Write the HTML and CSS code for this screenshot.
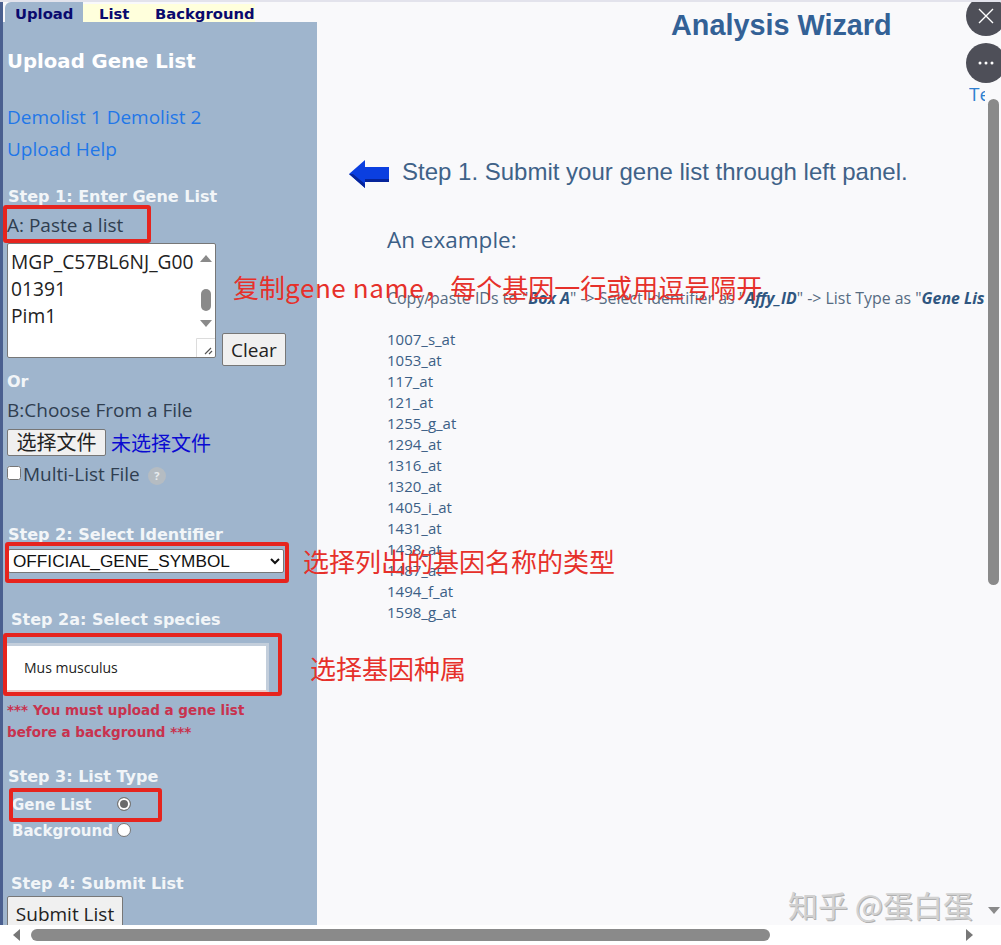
FILE: index.html
```html
<!DOCTYPE html>
<html lang="en">
<head>
    <meta charset="UTF-8">
    <meta name="viewport" content="width=device-width, initial-scale=1.0">
    <title>Analysis Wizard</title>
    <link rel="stylesheet" href="styles.css">
</head>
<body>

<div class="window">
    <div class="content">
        <div class="sidebar">
            <div class="tabs">
                <span class="tab tab-active">Upload</span>
                <span class="tab tab-list">List</span>
                <span class="tab tab-bg">Background</span>
            </div>
            <div class="panel">
                <h2 class="panel-title">Upload Gene List</h2>
                <p class="links"><a href="#">Demolist 1</a> <a href="#">Demolist 2</a></p>
                <p class="links links-help"><a href="#">Upload Help</a></p>

                <h4 class="step step-1">Step 1: Enter Gene List</h4>
                <div class="plain plain-paste">A: Paste a list</div>
                <div class="paste-row">
                    <div class="paste-box">
                        <div class="paste-text">MGP_C57BL6NJ_G00<br>01391<br>Pim1</div>
                        <div class="paste-scroll">
                            <span class="arrow arrow-up"></span>
                            <span class="paste-thumb"></span>
                            <span class="arrow arrow-down"></span>
                        </div>
                        <svg class="grip" width="19" height="19" viewBox="0 0 19 19">
                            <path d="M0.5 19V0.5H19" fill="#fff" stroke="#dcdcdc"/>
                            <path d="M9 16L15 10M13 16L16 13" stroke="#555" stroke-width="1.2"/>
                        </svg>
                    </div>
                    <button class="btn btn-clear" type="button">Clear</button>
                </div>
                <h4 class="step step-or">Or</h4>
                <div class="plain plain-file">B:Choose From a File</div>
                <div class="file-row">
                    <button class="btn btn-file" type="button">选择文件</button>
                    <span class="file-none">未选择文件</span>
                </div>
                <div class="multi-row">
                    <input class="check" type="checkbox">
                    <span class="plain">Multi-List File</span>
                    <span class="help-dot">?</span>
                </div>

                <h4 class="step step-2">Step 2: Select Identifier</h4>
                <select class="identifier">
                    <option>OFFICIAL_GENE_SYMBOL</option>
                </select>

                <h4 class="step step-2a">Step 2a: Select species</h4>
                <div class="species">Mus musculus</div>
                <p class="warning">*** You must upload a gene list before a background ***</p>

                <h4 class="step step-3">Step 3: List Type</h4>
                <div class="radio-row radio-first">
                    <span class="radio-label">Gene List</span>
                    <span class="radio radio-on"></span>
                </div>
                <div class="radio-row">
                    <span class="radio-label">Background</span>
                    <span class="radio"></span>
                </div>

                <h4 class="step step-4">Step 4: Submit List</h4>
                <button class="btn btn-submit" type="button">Submit List</button>
            </div>
        </div>

        <div class="main">
            <h1 class="wizard-title">Analysis Wizard</h1>
            <div class="step-line">
                <svg class="left-arrow" width="42" height="30" viewBox="0 0 42 30">
                    <path d="M1 15L17 1V8H41V23H17V29Z" fill="#0b3fe0"/>
                    <path d="M17 23H41V20H17ZM1 15L17 29V25L5 15Z" fill="#06249a"/>
                </svg>
                <span>Step 1. Submit your gene list through left panel.</span>
            </div>
            <div class="example">
                <h3 class="example-title">An example:</h3>
                <p class="example-note">Copy/paste IDs to "<b><i>Box A</i></b>" -> Select Identifier as "<b><i>Affy_ID</i></b>" -> List Type as "<b><i>Gene List</i></b>" -> Submit List</p>
                <ul class="ids">
                    <li>1007_s_at</li>
                    <li>1053_at</li>
                    <li>117_at</li>
                    <li>121_at</li>
                    <li>1255_g_at</li>
                    <li>1294_at</li>
                    <li>1316_at</li>
                    <li>1320_at</li>
                    <li>1405_i_at</li>
                    <li>1431_at</li>
                    <li>1438_at</li>
                    <li>1487_at</li>
                    <li>1494_f_at</li>
                    <li>1598_g_at</li>
                </ul>
            </div>
        </div>

        <div class="vbar">
            <span class="vthumb"></span>
            <span class="arrow arrow-down vbar-down"></span>
        </div>
    </div>

    <div class="hbar">
        <span class="arrow arrow-left"></span>
        <span class="hthumb"></span>
        <span class="arrow arrow-right"></span>
    </div>

    <!-- floating buttons from the page behind -->
    <div class="float-btn float-close">
        <svg width="16" height="16" viewBox="0 0 16 16"><path d="M1 1L15 15M15 1L1 15" stroke="#fff" stroke-width="1.4"/></svg>
    </div>
    <div class="float-btn float-more">
        <svg width="16" height="4" viewBox="0 0 16 4"><circle cx="2" cy="2" r="1.5" fill="#fff"/><circle cx="8" cy="2" r="1.5" fill="#fff"/><circle cx="14" cy="2" r="1.5" fill="#fff"/></svg>
    </div>
    <span class="float-link">Te</span>

    <!-- red annotations on top of the screenshot -->
    <div class="mark mark-paste"></div>
    <div class="mark mark-identifier"></div>
    <div class="mark mark-species"></div>
    <div class="mark mark-type"></div>
    <span class="note note-paste">复制<span class="note-latin">gene name</span>，每个基因一行或用逗号隔开</span>
    <span class="note note-identifier">选择列出的基因名称的类型</span>
    <span class="note note-species">选择基因种属</span>
    <span class="watermark">知乎 @蛋白蛋</span>
</div>

</body>
</html>
```

FILE: styles.css
```css
body {
    margin: 0;
    overflow: hidden;
    background-color: #f9f9fb;
    font-family: "Open Sans", "Noto Sans CJK SC", sans-serif;
    color: #2b3a4a;
}
.window {
    position: relative;
    display: flex;
    flex-direction: column;
    width: 1001px;
    height: 945px;
    overflow: hidden;
    box-sizing: border-box;
    border-top: 2px solid #e3e3ec;
}
.content {
    display: flex;
    flex: 1;
    min-height: 0;
}

/* left panel */
.sidebar {
    width: 314px;
    flex: none;
    border-left: 3px solid #4a5f8f;
    display: flex;
    flex-direction: column;
    overflow: hidden;
}
.tabs {
    display: flex;
    height: 20px;
    flex: none;
    padding-left: 2px;
    background-color: #f9f9fb;
    font-family: "DejaVu Sans", sans-serif;
    font-weight: bold;
    font-size: 14.8px;
    color: #0a0a6e;
}
.tab {
    padding-top: 1px;
    line-height: 18px;
    box-sizing: border-box;
    background-color: #ffffdc;
    margin-top: 2px;
}
.tab-active {
    width: 78px;
    padding-left: 10px;
    background-color: #9fb5cd;
    border-top-left-radius: 6px;
    margin-top: 0;
    padding-top: 3px;
}
.tab-list {
    width: 62px;
    padding-left: 16px;
}
.tab-bg {
    width: 110px;
    padding-left: 10px;
}
.panel {
    flex: 1;
    background-color: #9fb5cd;
    padding-left: 4px;
    overflow: hidden;
}
.panel-title {
    margin: 26px 0 0;
    font-family: "DejaVu Sans", sans-serif;
    font-size: 19.7px;
    line-height: 28px;
    color: #fff;
}
.links {
    margin: 0;
    font-size: 19px;
    line-height: 32px;
}
.links:first-of-type {
    margin-top: 25px;
}
.links a {
    color: #1f77e8;
    text-decoration: none;
}
.step {
    margin: 0;
    font-family: "DejaVu Sans", sans-serif;
    font-size: 16px;
    line-height: 22px;
    color: #f2f5f8;
}
.step-1 {
    margin-top: 21px;
    margin-left: 1px;
}
.plain {
    font-size: 19px;
    line-height: 28px;
    color: #2f3e50;
}
.plain-paste {
    margin-top: 3px;
}

/* gene list box */
.paste-row {
    display: flex;
    align-items: flex-end;
    margin-top: 4px;
}
.paste-box {
    position: relative;
    width: 209px;
    height: 115px;
    box-sizing: border-box;
    background-color: #fff;
    border: 1px solid #777;
    border-radius: 2px;
}
.paste-text {
    padding: 4px 0 0 3px;
    font-size: 19.2px;
    line-height: 27px;
    color: #222;
}
.paste-scroll {
    position: absolute;
    top: 11px;
    right: 2px;
    width: 14px;
    height: 78px;
    display: flex;
    flex-direction: column;
    align-items: center;
}
.paste-thumb {
    width: 10px;
    height: 22px;
    border-radius: 5px;
    background-color: #8a8a8a;
    margin-top: 27px;
    margin-bottom: 9px;
}
.grip {
    position: absolute;
    right: 0;
    bottom: 0;
}
.arrow {
    display: block;
    width: 0;
    height: 0;
    border-style: solid;
    border-color: transparent;
}
.arrow-up {
    border-width: 0 6px 7px;
    border-bottom-color: #8a8a8a;
}
.arrow-down {
    border-width: 7px 6px 0;
    border-top-color: #8a8a8a;
}
.arrow-left {
    border-width: 6px 7px 6px 0;
    border-right-color: #777;
}
.arrow-right {
    border-width: 6px 0 6px 7px;
    border-left-color: #777;
}
.btn {
    font-family: "Open Sans", "Noto Sans CJK SC", sans-serif;
    font-size: 19px;
    color: #222;
    background-color: #f0f0f0;
    border: 1px solid #777;
    border-radius: 2px;
    padding: 0;
}
.btn-clear {
    width: 64px;
    height: 33px;
    margin-left: 6px;
    margin-bottom: -8px;
}
.step-or {
    margin-top: 13px;
}
.plain-file {
    margin-top: 3px;
}
.file-row {
    display: flex;
    align-items: center;
    margin-top: 4px;
}
.btn-file {
    width: 99px;
    height: 27px;
    font-size: 20px;
    line-height: 24px;
}
.file-none {
    margin-left: 5px;
    font-size: 20px;
    color: #0a0ad2;
}
.multi-row {
    display: flex;
    align-items: center;
    margin-top: 3px;
}
.check {
    width: 14px;
    height: 14px;
    margin: -2px 2px 0 0;
}
.help-dot {
    width: 18px;
    height: 18px;
    margin-left: 8px;
    margin-top: 3px;
    border-radius: 50%;
    background-color: #b5bcc2;
    color: #e8ecef;
    font-size: 11px;
    font-weight: bold;
    line-height: 18px;
    text-align: center;
}

/* identifier + species */
.step-2 {
    margin-top: 36px;
    margin-left: 1px;
}
.identifier {
    display: block;
    width: 276px;
    height: 24px;
    margin-top: 3px;
    margin-left: 1px;
    font-family: "Liberation Sans", sans-serif;
    font-size: 17.2px;
    color: #111;
    background-color: #fff;
    border: 1px solid #777;
    border-radius: 2px;
}
.step-2a {
    margin-top: 36px;
    margin-left: 4px;
}
.species {
    width: 262px;
    height: 50px;
    margin-top: 12px;
    box-sizing: border-box;
    padding-left: 17px;
    background-color: #fff;
    border: 3px solid #c3cedb;
    border-bottom-color: #ecc8c4;
    border-left-width: 0;
    border-right-width: 3px;
    font-size: 14px;
    line-height: 44px;
    color: #222;
}
.warning {
    margin: 6px 0 0;
    width: 270px;
    font-family: "DejaVu Sans", sans-serif;
    font-weight: bold;
    font-size: 13.5px;
    line-height: 22px;
    color: #c8324e;
}

/* list type */
.step-3 {
    margin-top: 23px;
    margin-left: 1px;
}
.radio-row {
    display: flex;
    align-items: center;
    height: 26px;
    margin-left: 5px;
    font-family: "DejaVu Sans", sans-serif;
    font-weight: bold;
    font-size: 15px;
    color: #f2f5f8;
}
.radio-first {
    margin-top: 5px;
}
.radio-label {
    width: 105px;
    margin-top: -2px;
}
.radio {
    width: 12px;
    height: 12px;
    margin-top: -4px;
    background-color: #fff;
    border: 1px solid #777;
    border-radius: 50%;
}
.radio-on {
    background-color: #6a6a6a;
    box-shadow: inset 0 0 0 2px #fff;
}
.step-4 {
    margin-top: 28px;
    margin-left: 4px;
}
.btn-submit {
    display: block;
    width: 116px;
    height: 36px;
    margin-top: 1px;
}

/* right side */
.main {
    flex: 1;
    min-width: 0;
    overflow: hidden;
    color: #3c5f86;
}
.wizard-title {
    margin: 4px 0 0 354px;
    font-family: "Liberation Sans", sans-serif;
    font-size: 28.8px;
    line-height: 38px;
    font-weight: bold;
    color: #336196;
}
.step-line {
    display: flex;
    align-items: center;
    margin: 111px 0 0 31px;
    font-family: "Liberation Sans", sans-serif;
    font-size: 24px;
    line-height: 34px;
    white-space: nowrap;
    color: #3f6288;
}
.left-arrow {
    margin-right: 12px;
    margin-top: 3px;
}
.example {
    margin-left: 70px;
}
.example-title {
    margin: 36px 0 0;
    font-weight: normal;
    font-size: 22.5px;
    line-height: 30px;
}
.example-note {
    margin: 33px 0 0;
    font-size: 15.9px;
    line-height: 20px;
    white-space: nowrap;
    color: #566b82;
}
.example-note b {
    color: #2f5680;
}
.ids {
    list-style: none;
    margin: 21px 0 0;
    padding: 0;
    font-size: 15px;
    line-height: 21px;
}
.vbar {
    width: 13px;
    margin-left: 3px;
    flex: none;
    display: flex;
    flex-direction: column;
    align-items: flex-start;
}
.vthumb {
    width: 11px;
    height: 486px;
    margin-top: 97px;
    border-radius: 6px;
    background-color: #8a8a8a;
}
.vbar-down {
    margin-top: 322px;
    margin-left: 0;
}
.hbar {
    display: flex;
    align-items: center;
    height: 20px;
    flex: none;
    padding-left: 13px;
    background-color: #fff;
    position: relative;
}
.hthumb {
    width: 739px;
    height: 12px;
    margin-left: 11px;
    border-radius: 6px;
    background-color: #8a8a8a;
}
.hbar .arrow-right {
    margin-left: 196px;
}

/* floating round buttons */
.float-btn {
    position: absolute;
    left: 966px;
    width: 40px;
    height: 40px;
    display: flex;
    align-items: center;
    justify-content: center;
    border-radius: 50%;
    background-color: #4e4f58;
}
.float-close {
    top: -6px;
}
.float-more {
    top: 41px;
}
.float-link {
    position: absolute;
    left: 969px;
    top: 81px;
    width: 16px;
    overflow: hidden;
    font-family: "Open Sans", sans-serif;
    font-size: 19px;
    line-height: 22px;
    color: #2f7fd0;
}

/* annotations */
.mark {
    position: absolute;
    box-sizing: border-box;
    border: 4px solid #e6241e;
    border-radius: 3px;
}
.mark-paste {
    left: 3px;
    top: 203px;
    width: 148px;
    height: 38px;
}
.mark-identifier {
    left: 5px;
    top: 540px;
    width: 284px;
    height: 41px;
}
.mark-species {
    left: 3px;
    top: 631px;
    width: 279px;
    height: 63px;
}
.mark-type {
    left: 9px;
    top: 786px;
    width: 153px;
    height: 34px;
}
.note {
    position: absolute;
    font-family: "Noto Sans CJK SC", sans-serif;
    font-size: 26px;
    line-height: 34px;
    white-space: nowrap;
    color: #e6302a;
}
.note-latin {
    letter-spacing: 0.6px;
}
.note-paste {
    left: 233px;
    top: 268px;
}
.note-identifier {
    left: 303px;
    top: 542px;
}
.note-species {
    left: 310px;
    top: 649px;
}
.watermark {
    position: absolute;
    left: 788px;
    top: 883px;
    font-family: "Noto Sans CJK SC", sans-serif;
    font-size: 30px;
    line-height: 38px;
    white-space: nowrap;
    color: #d2d2d2;
    text-shadow: 1px 1px 0 #b0b0b0;
}
```
